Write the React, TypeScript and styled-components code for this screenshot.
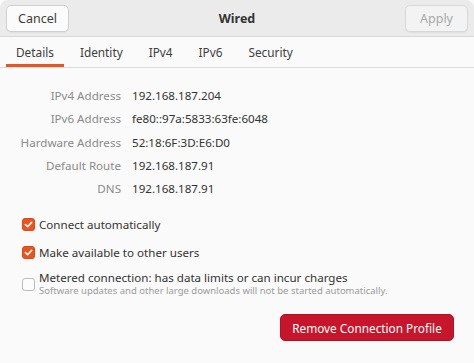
import styled, { createGlobalStyle } from "styled-components";

const GlobalStyle = createGlobalStyle`
	html, body {
		margin: 0;
		padding: 0;
		background: #fafafa;
	}
	body {
		font-family: "Noto Sans", "Open Sans", sans-serif;
		font-size: 12px;
		color: #3d3d3d;
	}
`;

const details = [
	["IPv4 Address", "192.168.187.204"],
	["IPv6 Address", "fe80::97a:5833:63fe:6048"],
	["Hardware Address", "52:18:6F:3D:E6:D0"],
	["Default Route", "192.168.187.91"],
	["DNS", "192.168.187.91"],
];

const tabs = ["Details", "Identity", "IPv4", "IPv6", "Security"];

const Check = () => (
	<svg width="9" height="9" viewBox="0 0 10 10">
		<path
			d="M1.6 5.2 L4 7.5 L8.5 2.6"
			fill="none"
			stroke="#fff"
			strokeWidth="1.8"
			strokeLinecap="round"
			strokeLinejoin="round"
		/>
	</svg>
);

export default function App() {
	return (
		<>
			<GlobalStyle />
			<Window>
				<HeaderBar>
					<HeaderButton>Cancel</HeaderButton>
					<Title>Wired</Title>
					<HeaderButton disabled>Apply</HeaderButton>
				</HeaderBar>
				<TabBar>
					{tabs.map((t, i) => (
						<Tab key={t} $active={i === 0}>
							{t}
						</Tab>
					))}
				</TabBar>
				<Content>
					<DetailGrid>
						{details.map(([label, value]) => [
							<Label key={label}>{label}</Label>,
							<Value key={label + "v"}>{value}</Value>,
						])}
					</DetailGrid>
					<Options>
						<CheckRow>
							<Box $checked>
								<Check />
							</Box>
							<CheckText>Connect automatically</CheckText>
						</CheckRow>
						<CheckRow>
							<Box $checked>
								<Check />
							</Box>
							<CheckText>Make available to other users</CheckText>
						</CheckRow>
						<CheckRow>
							<Box />
							<div>
								<CheckText>Metered connection: has data limits or can incur charges</CheckText>
								<Hint>Software updates and other large downloads will not be started automatically.</Hint>
							</div>
						</CheckRow>
					</Options>
					<Footer>
						<DangerButton>Remove Connection Profile</DangerButton>
					</Footer>
				</Content>
			</Window>
		</>
	);
}

const Window = styled.div`
	width: 474px;
	height: 363px;
	display: flex;
	flex-direction: column;
	background: #fafafa;
	border-radius: 8px 8px 0 0;
	overflow: hidden;
`;

const HeaderBar = styled.div`
	height: 37px;
	box-sizing: border-box;
	display: flex;
	align-items: center;
	justify-content: space-between;
	padding: 0 6px;
	background: #ebebeb;
	border-bottom: 1px solid #d8d8d8;
`;

const HeaderButton = styled.button`
	height: 27px;
	width: 63px;
	font-family: inherit;
	font-size: 12.5px;
	color: #3d3d3d;
	background: #fbfbfb;
	border: 1px solid #d0d0d0;
	border-radius: 5px;
	box-shadow: 0 1px 1px rgba(0, 0, 0, 0.05);
	&:disabled {
		color: #a8a8a8;
		background: #f3f3f3;
		border-color: #d8d8d8;
	}
`;

const Title = styled.div`
	font-weight: 700;
	font-size: 12.5px;
	color: #333;
`;

const TabBar = styled.div`
	height: 31px;
	box-sizing: border-box;
	display: flex;
	gap: 6px;
	padding: 0 6px;
	background: #fafafa;
	border-bottom: 1px solid #dcdcdc;
`;

const Tab = styled.div<{ $active?: boolean }>`
	display: flex;
	align-items: center;
	padding: 0 10px;
	font-size: 11.8px;
	color: #3d3d3d;
	box-shadow: ${(p) => (p.$active ? "inset 0 -3px 0 #e95420" : "none")};
`;

const Content = styled.div`
	flex: 1;
	display: flex;
	flex-direction: column;
	padding-top: 16px;
`;

const DetailGrid = styled.div`
	display: grid;
	grid-template-columns: 121px auto;
	column-gap: 11px;
	grid-auto-rows: 23.3px;
	align-items: center;
`;

const Label = styled.div`
	text-align: right;
	color: #8a8a8a;
	font-size: 11.6px;
`;

const Value = styled.div`
	color: #333;
	font-size: 11.6px;
`;

const Options = styled.div`
	display: flex;
	flex-direction: column;
	gap: 9px;
	padding: 15px 0 0 22px;
`;

const CheckRow = styled.div`
	display: flex;
	align-items: center;
	gap: 4px;
	min-height: 19px;
`;

const Box = styled.div<{ $checked?: boolean }>`
	width: 13px;
	height: 13px;
	box-sizing: border-box;
	flex-shrink: 0;
	display: flex;
	align-items: center;
	justify-content: center;
	border-radius: 3px;
	background: ${(p) => (p.$checked ? "#e95420" : "#fdfdfd")};
	border: 1px solid ${(p) => (p.$checked ? "#d94b18" : "#bdbdbd")};
`;

const CheckText = styled.div`
	font-size: 11.6px;
	color: #333;
	line-height: 14px;
`;

const Hint = styled.div`
	font-size: 9.5px;
	color: #9a9a9a;
	line-height: 12px;
`;

const Footer = styled.div`
	display: flex;
	justify-content: flex-end;
	padding: 17px 20px 0 0;
`;

const DangerButton = styled.button`
	width: 174px;
	height: 27px;
	font-family: inherit;
	font-size: 11.8px;
	color: #fff;
	background: #c7162b;
	border: 1px solid #b01226;
	border-radius: 5px;
`;
